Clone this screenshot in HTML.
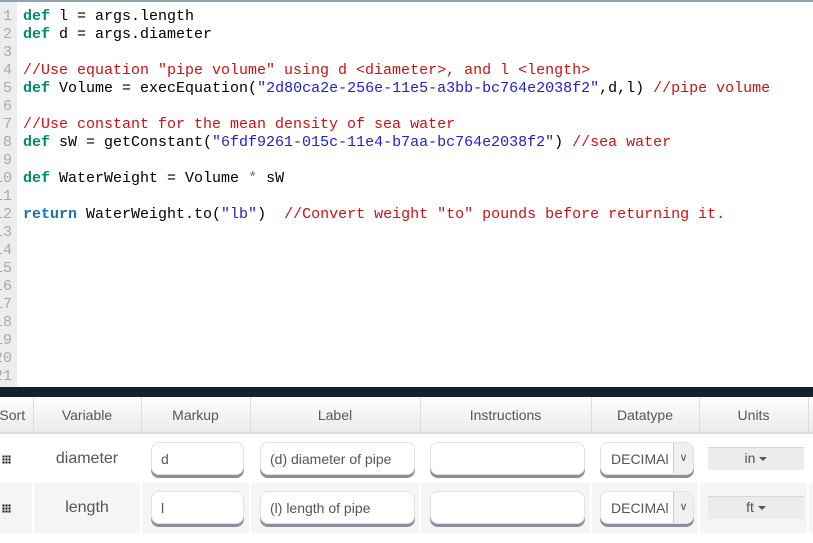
<!DOCTYPE html>
<html><head><style>
*{margin:0;padding:0;box-sizing:border-box}
body{width:813px;height:543px;overflow:hidden;background:#fff;position:relative;font-family:"Liberation Sans",sans-serif}
#ed{position:absolute;left:0;top:0;width:813px;height:387px;border-top:2px solid #8fa3b5;background:#fff}
#gut{position:absolute;left:0;top:0;width:17px;height:385px;background:#ededed}
.ln{position:absolute;left:0;width:12px;text-align:right;font-family:"Liberation Mono","Courier New",monospace;font-size:15px;color:#a8a8a8;overflow:visible;white-space:nowrap;direction:rtl}
.cl{position:absolute;left:23px;font-family:"Liberation Mono","Courier New",monospace;font-size:15px;color:#000;white-space:pre;line-height:18px}
.k{color:#008a6b;font-weight:bold}.r{color:#1a6fb5;font-weight:bold}.s{color:#2020d0}.c{color:#d01010}.o{color:#777}
#bar{position:absolute;left:0;top:387px;width:813px;height:10px;background:#13202e}
table{position:absolute;left:-8px;top:397px;width:836px;border-collapse:collapse;table-layout:fixed}
th{height:36px;font-weight:normal;font-size:14px;color:#555;background:linear-gradient(#fdfdfd,#ececec);border-right:1px solid #ddd;border-bottom:2px solid #ddd;text-align:center}
td{height:50px;font-size:16px;color:#555;text-align:center;border-right:2px solid #fff;position:relative}
tr.b td{background:#f5f5f5}
.inp{position:absolute;top:8px;height:33px;background:#fff;border:1px solid #e2e2e2;border-radius:8px;box-shadow:0 3px 0 #8a8f99;text-align:left;padding:8px 9px;font-size:14px;color:#555}
.unit{position:absolute;left:8px;top:13px;width:96px;height:23px;background:#ececec;border-top:1px solid #d8d8d8;font-size:14px;color:#555;line-height:21px;text-align:center}
.car{display:inline-block;width:0;height:0;border-left:4px solid transparent;border-right:4px solid transparent;border-top:4px solid #555;margin-left:4px;vertical-align:middle}
.grip{position:absolute;left:10px;top:21px;width:9px;height:9px;background-image:radial-gradient(#111 55%,transparent 60%);background-size:3px 3px}
</style></head><body>
<div id="ed">
<div id="gut"></div>
<div style="position:absolute;left:0;top:0">
<div class="ln" style="top:6px">1</div><div class="ln" style="top:24px">2</div><div class="ln" style="top:42px">3</div><div class="ln" style="top:60px">4</div><div class="ln" style="top:78px">5</div><div class="ln" style="top:96px">6</div><div class="ln" style="top:114px">7</div><div class="ln" style="top:132px">8</div><div class="ln" style="top:150px">9</div><div class="ln" style="top:168px">10</div><div class="ln" style="top:186px">11</div><div class="ln" style="top:204px">12</div><div class="ln" style="top:222px">13</div><div class="ln" style="top:240px">14</div><div class="ln" style="top:258px">15</div><div class="ln" style="top:276px">16</div><div class="ln" style="top:294px">17</div><div class="ln" style="top:312px">18</div><div class="ln" style="top:330px">19</div><div class="ln" style="top:348px">20</div><div class="ln" style="top:366px">21</div>
<div class="cl" style="top:6px"><span class="k">def</span> l = args.length
<span class="k">def</span> d = args.diameter

<span class="c">//Use equation "pipe volume" using d &lt;diameter&gt;, and l &lt;length&gt;</span>
<span class="k">def</span> Volume = execEquation(<span class="s">"2d80ca2e-256e-11e5-a3bb-bc764e2038f2"</span>,d,l) <span class="c">//pipe volume</span>

<span class="c">//Use constant for the mean density of sea water</span>
<span class="k">def</span> sW = getConstant(<span class="s">"6fdf9261-015c-11e4-b7aa-bc764e2038f2"</span>) <span class="c">//sea water</span>

<span class="k">def</span> WaterWeight = Volume <span class="o">*</span> sW

<span class="r">return</span> WaterWeight.to(<span class="s">"lb"</span>)  <span class="c">//Convert weight "to" pounds before returning it.</span></div>
</div>
</div>
<div id="bar"></div>
<table>
<colgroup><col style="width:41px"><col style="width:108px"><col style="width:109px"><col style="width:170px"><col style="width:171px"><col style="width:108px"><col style="width:109px"><col style="width:20px"></colgroup>
<tr><th>Sort</th><th>Variable</th><th>Markup</th><th>Label</th><th>Instructions</th><th>Datatype</th><th>Units</th><th></th></tr>
<tr><td><div class="grip"></div></td><td>diameter</td><td><div class="inp" style="left:9px;width:93px">d</div></td><td><div class="inp" style="left:9px;width:155px">(d) diameter of pipe</div></td><td><div class="inp" style="left:9px;width:155px"></div></td><td><div class="inp" style="left:8px;width:94px;padding:8px 10px;overflow:hidden">DECIMAl<span style="position:absolute;right:0;top:0;width:20px;height:31px;background:#f0f0f0;border-left:1px solid #ccc;font-size:11px;line-height:31px;text-align:center">&#8744;</span></div></td><td><div class="unit">in<span class="car"></span></div></td><td></td></tr>
<tr class="b"><td><div class="grip"></div></td><td>length</td><td><div class="inp" style="left:9px;width:93px">l</div></td><td><div class="inp" style="left:9px;width:155px">(l) length of pipe</div></td><td><div class="inp" style="left:9px;width:155px"></div></td><td><div class="inp" style="left:8px;width:94px;padding:8px 10px;overflow:hidden">DECIMAl<span style="position:absolute;right:0;top:0;width:20px;height:31px;background:#f0f0f0;border-left:1px solid #ccc;font-size:11px;line-height:31px;text-align:center">&#8744;</span></div></td><td><div class="unit">ft<span class="car"></span></div></td><td></td></tr>
</table>
</body></html>
